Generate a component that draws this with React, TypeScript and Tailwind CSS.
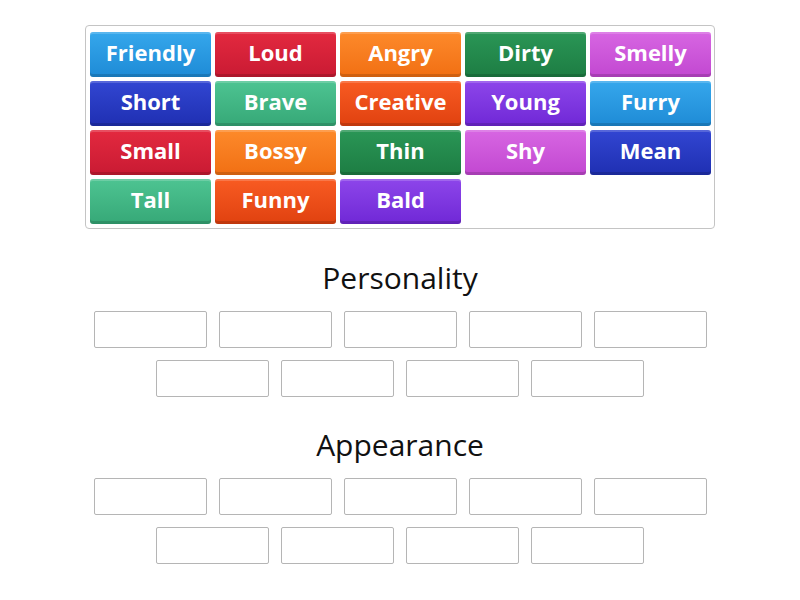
const tileStyles: Record<string, string> = {
  blue: 'bg-linear-to-b from-[#35a7ec] to-[#1e8bd6]',
  red: 'bg-linear-to-b from-[#e3293f] to-[#c91a33]',
  orange: 'bg-linear-to-b from-[#fd8a2a] to-[#f16f12]',
  green: 'bg-linear-to-b from-[#2a9656] to-[#1d7d43]',
  pink: 'bg-linear-to-b from-[#d766e2] to-[#c247d1]',
  navy: 'bg-linear-to-b from-[#3246d2] to-[#1f2fb2]',
  mint: 'bg-linear-to-b from-[#4dc492] to-[#36a877]',
  flame: 'bg-linear-to-b from-[#f85b22] to-[#e0410f]',
  purple: 'bg-linear-to-b from-[#8d45ea] to-[#7027d6]',
};

const tiles = [
  { label: 'Friendly', color: 'blue' },
  { label: 'Loud', color: 'red' },
  { label: 'Angry', color: 'orange' },
  { label: 'Dirty', color: 'green' },
  { label: 'Smelly', color: 'pink' },
  { label: 'Short', color: 'navy' },
  { label: 'Brave', color: 'mint' },
  { label: 'Creative', color: 'flame' },
  { label: 'Young', color: 'purple' },
  { label: 'Furry', color: 'blue' },
  { label: 'Small', color: 'red' },
  { label: 'Bossy', color: 'orange' },
  { label: 'Thin', color: 'green' },
  { label: 'Shy', color: 'pink' },
  { label: 'Mean', color: 'navy' },
  { label: 'Tall', color: 'mint' },
  { label: 'Funny', color: 'flame' },
  { label: 'Bald', color: 'purple' },
];

function DropGroup({ title }: { title: string }) {
  return (
    <div className="flex flex-col items-center">
      <h2 className="text-[30px] leading-[38px] text-[#111] mb-[14px]">{title}</h2>
      <div className="flex flex-col items-center gap-3">
        <div className="flex gap-3">
          {[0, 1, 2, 3, 4].map((i) => (
            <div key={i} className="w-[113px] h-[37px] border border-[#b5b5b5] rounded-[2px]" />
          ))}
        </div>
        <div className="flex gap-3">
          {[0, 1, 2, 3].map((i) => (
            <div key={i} className="w-[113px] h-[37px] border border-[#b5b5b5] rounded-[2px]" />
          ))}
        </div>
      </div>
    </div>
  );
}

export default function App() {
  return (
    <div
      className="w-[800px] h-[600px] bg-white flex flex-col items-center"
      style={{ fontFamily: '"Open Sans", sans-serif' }}
    >
      <div className="mt-[25px] w-[630px] border border-[#c4c4c4] rounded-[4px] pl-[4px] pt-[6px] pb-[4px]">
        <div className="grid grid-cols-[repeat(5,121px)] gap-x-[4px] gap-y-[4px]">
          {tiles.map((t) => (
            <div
              key={t.label}
              className={`${tileStyles[t.color]} h-[45px] rounded-[3px] flex items-center justify-center pb-[5px] text-white font-bold text-[22px] shadow-[inset_0_-3px_0_rgba(0,0,0,0.14),inset_0_2px_0_rgba(255,255,255,0.18)]`}
            >
              {t.label}
            </div>
          ))}
        </div>
      </div>
      <div className="mt-[30px]">
        <DropGroup title="Personality" />
      </div>
      <div className="mt-[29px]">
        <DropGroup title="Appearance" />
      </div>
    </div>
  );
}
